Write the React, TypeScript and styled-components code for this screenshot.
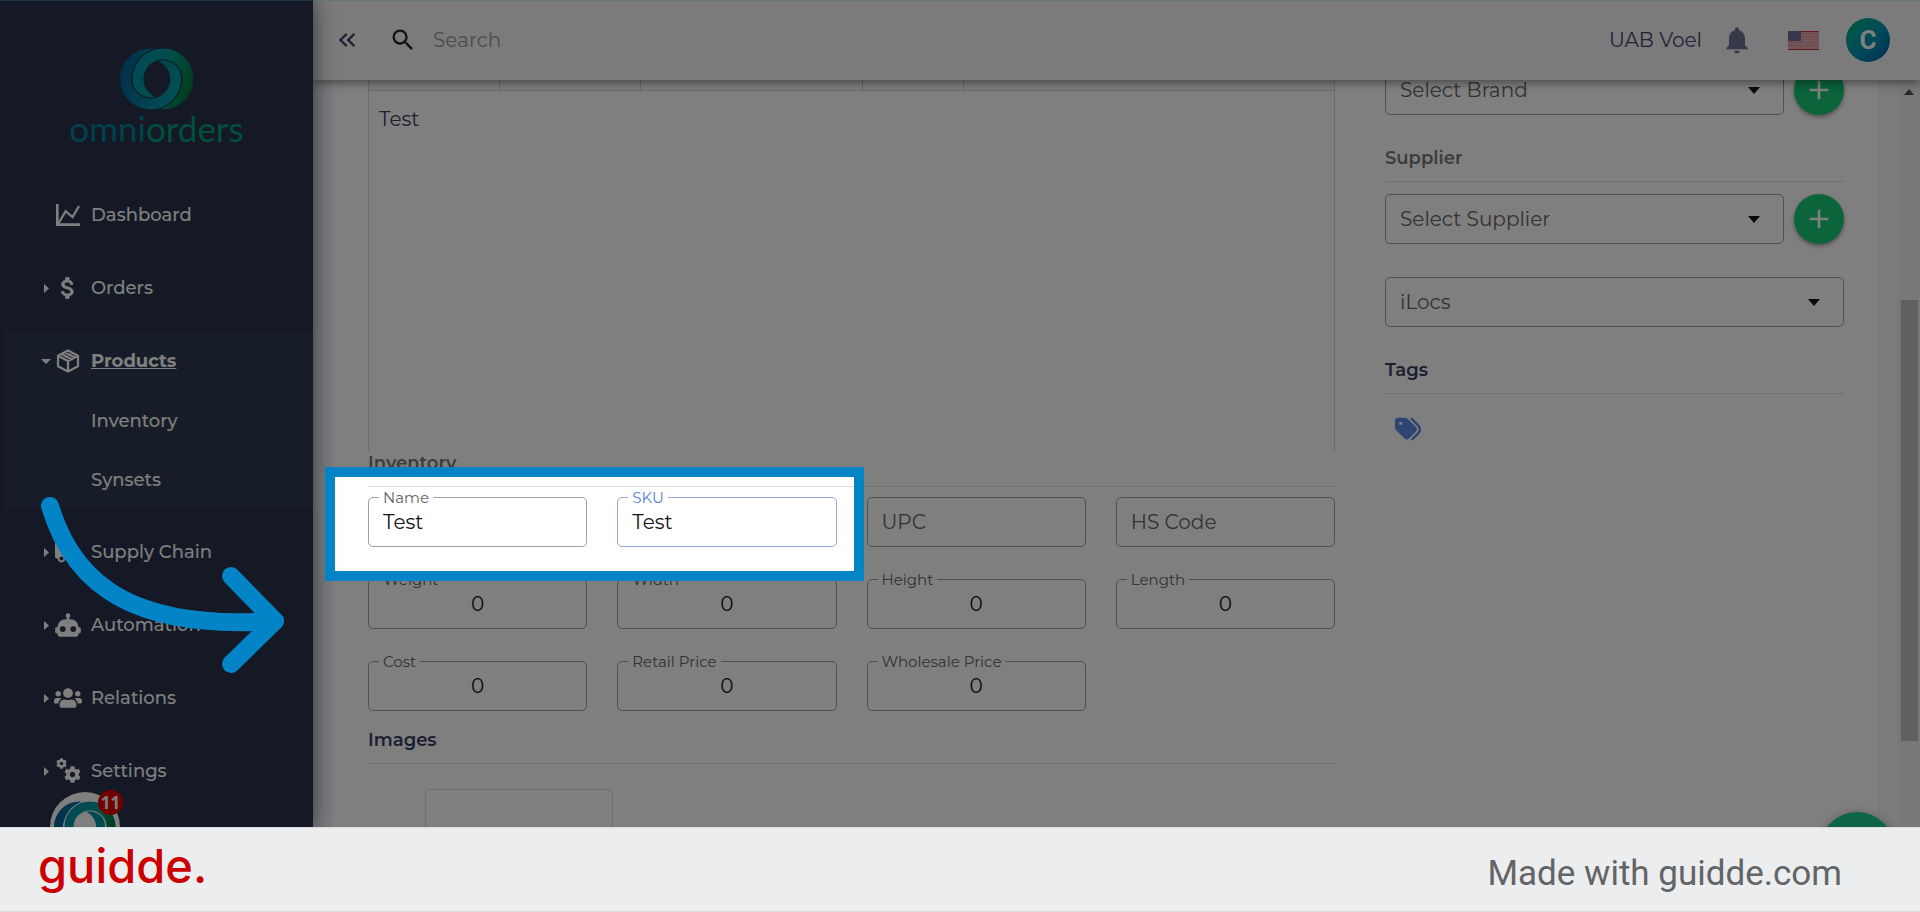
import React from "react";
import styled, { createGlobalStyle, css } from "styled-components";
import {
  MdKeyboardDoubleArrowLeft,
  MdNotifications,
  MdSearch,
  MdAdd,
} from "react-icons/md";
import { FaCog, FaTruck, FaUsers } from "react-icons/fa";
import { FaTags } from "react-icons/fa6";

const ui = `Montserrat, Inter, "Liberation Sans", sans-serif`;
const accent = "#0284c7";

const GlobalStyle = createGlobalStyle`
  *, *::before, *::after { box-sizing: border-box; }
  body { margin: 0; font-family: ${ui}; font-weight: 400; color: #364060; }
  h1, h2, p, ul { margin: 0; padding: 0; }
  ul { list-style: none; }
  button, input, select { font: inherit; color: inherit; margin: 0; }
  button { cursor: pointer; padding: 0; border: 0; background: none; }
  a { color: inherit; text-decoration: none; }
`;

const Page = styled.div`
  display: flex;
  flex-direction: column;
  height: 100vh;
`;

const Stage = styled.div`
  position: relative;
  flex: 1;
  min-height: 0;
  display: flex;
  overflow: hidden;
  background: #f2f6fc;
  &::after {
    content: "";
    position: absolute;
    z-index: 5;
    inset: 0 0 auto;
    height: 1px;
    background: rgba(60, 110, 135, 0.3);
  }
`;

/* Sidebar */

const Sidebar = styled.nav`
  position: relative;
  z-index: 3;
  flex: 0 0 313px;
  background: #28324a;
  color: #fff;
  box-shadow: 0 0 20px rgba(0, 0, 0, 0.6);
`;

const Brand = styled.a`
  display: flex;
  flex-direction: column;
  align-items: center;
  height: 185px;
  padding-top: 47px;
`;

const BrandName = styled.span`
  font-family: Lato, sans-serif;
  font-size: 35px;
  line-height: 34px;
  color: #00829c;
`;

const BrandTail = styled.span`
  color: #00a078;
`;

const NavList = styled.ul`
  display: flex;
  flex-direction: column;
  gap: 13px;
`;

const NavGroup = styled.li<{ $open?: boolean }>`
  ${(p) => p.$open && css`
    margin-left: 5px;
    background: #2f3a50;
    a { padding-left: 35px; }
  `}
`;

const NavLink = styled.a<{ $active?: boolean }>`
  display: flex;
  align-items: center;
  height: 60px;
  padding-left: 40px;
  font-size: 18px;
  font-weight: ${(p) => (p.$active ? 700 : 500)};
  text-decoration: ${(p) => (p.$active ? "underline" : "none")};
`;

const SubLink = styled.a`
  display: flex;
  align-items: center;
  height: 59px;
  font-size: 18px;
  font-weight: 500;
  && { padding-left: 86px; }
`;

const Caret = styled.span`
  display: flex;
  flex: 0 0 12px;
  justify-content: center;
`;

const NavIcon = styled.span`
  display: flex;
  flex: 0 0 31px;
  justify-content: center;
  margin-right: 8px;
`;

const ChatButton = styled.button`
  position: absolute;
  left: 50px;
  bottom: -35px;
  width: 70px;
  height: 70px;
  display: grid;
  place-items: center;
  border-radius: 50%;
  background: #fff;
`;

const Badge = styled.span`
  position: absolute;
  top: -2px;
  right: -3px;
  width: 25px;
  height: 25px;
  border-radius: 50%;
  background: #e60000;
  color: #fff;
  font: 700 17px/25px "Open Sans", sans-serif;
  text-align: center;
`;

/* Top bar */

const Main = styled.div`
  flex: 1;
  min-width: 0;
  display: flex;
  flex-direction: column;
`;

const TopBar = styled.header`
  position: relative;
  z-index: 2;
  flex: 0 0 80px;
  display: flex;
  align-items: center;
  padding: 0 30px 0 20px;
  background: #f6f6f6;
  box-shadow: 0 2px 10px rgba(0, 0, 0, 0.5);
`;

const IconButton = styled.button`
  display: flex;
  align-items: center;
  justify-content: center;
`;

const Search = styled.label`
  display: flex;
  align-items: center;
  width: 281px;
  height: 52px;
  margin-left: 12px;
  padding-left: 15px;
  gap: 16px;
  border: 1px solid #eee;
  border-radius: 6px;
  color: #222;
`;

const SearchInput = styled.input`
  flex: 1;
  min-width: 0;
  padding: 0;
  border: 0;
  outline: 0;
  background: none;
  font-size: 20px;
  &::placeholder { color: #9a9a9a; opacity: 1; }
`;

const Account = styled.div`
  display: flex;
  align-items: center;
  margin-left: auto;
  font-size: 20px;
  color: #40466a;
`;

const Bell = styled(IconButton)`
  margin: 0 35px 0 19px;
  color: #6c7490;
`;

const Avatar = styled.button`
  width: 44px;
  height: 44px;
  margin-left: 27px;
  border-radius: 50%;
  background: linear-gradient(135deg, #00b478 0%, #0098b4 50%, #0060a8 100%);
  color: #fff;
  font: 700 26px/44px Roboto, sans-serif;
`;

/* Scrolled form */

const Viewport = styled.div`
  flex: 1;
  min-height: 0;
  display: flex;
  overflow: hidden;
`;

const Paper = styled.main`
  flex: 1;
  display: grid;
  grid-template-columns: 967fr 459fr;
  column-gap: 50px;
  align-items: start;
  margin: -15px 20px 0;
  padding: 0 34px 0 35px;
  background: #fff;
`;

const Editor = styled.section`
  height: 386px;
  border: solid #d8d8d8;
  border-width: 0 1px;
`;

const EditorTools = styled.div`
  display: flex;
  height: 26px;
  background: #fbfbfb;
  border-bottom: 1px solid #dadada;
`;

const ToolGroup = styled.div<{ $w: number }>`
  flex: 0 0 ${(p) => p.$w}px;
  border-right: 1px solid #d0d0d0;
`;

const EditorText = styled.p`
  padding: 16px 10px;
  font-size: 20px;
  line-height: 24px;
`;

const Heading = styled.h2<{ $muted?: boolean }>`
  padding-bottom: 11px;
  border-bottom: 1px solid #dedede;
  font-size: 18px;
  line-height: 24px;
  font-weight: 600;
  color: ${(p) => (p.$muted ? "#787878" : "#364060")};
`;

const FieldGrid = styled.div`
  display: grid;
  grid-template-columns: repeat(4, minmax(0, 1fr));
  gap: 32px 30px;
  margin: 10px 0 17px;
`;

const FieldBox = styled.label<{ $focus?: boolean }>`
  position: relative;
  display: block;
  color: ${(p) => (p.$focus ? "#5a80d0" : "#666")};
  --line: ${(p) => (p.$focus ? "#94a8d4" : "#a0a0a0")};
`;

const FieldLabel = styled.span`
  position: absolute;
  top: -9px;
  left: 11px;
  padding: 0 4px;
  background: #fff;
  font-size: 15px;
  line-height: 20px;
`;

const control = css`
  display: block;
  width: 100%;
  height: 50px;
  padding: 0 14px;
  border: 1px solid var(--line, #a0a0a0);
  border-radius: 5px;
  background: none;
  outline: 0;
  font-size: 20px;
`;

const Input = styled.input<{ $center?: boolean }>`
  ${control}
  color: #141414;
  text-align: ${(p) => (p.$center ? "center" : "left")};
  &::placeholder { color: #666; opacity: 1; }
`;

const ImageSlot = styled.div`
  width: 188px;
  height: 188px;
  margin: 25px 0 0 57px;
  border: 1px solid #dcdcdc;
  border-radius: 5px;
`;

const SelectBox = styled.label`
  position: relative;
  flex: 1;
  display: block;
  svg {
    position: absolute;
    top: 22px;
    right: 24px;
    pointer-events: none;
  }
`;

const Select = styled.select`
  ${control}
  appearance: none;
  color: #666;
`;

const SelectRow = styled.div`
  display: flex;
  gap: 10px;
`;

const AddButton = styled.button`
  display: grid;
  place-items: center;
  width: 50px;
  height: 50px;
  border-radius: 50%;
  background: #16c874;
  color: #fff;
  box-shadow: 0 2px 4px rgba(0, 0, 0, 0.4);
`;

const Aside = styled.aside`
  display: flex;
  flex-direction: column;
`;

const AsideBlock = styled.section<{ $gap: number }>`
  display: flex;
  flex-direction: column;
  gap: 12px;
  margin-top: ${(p) => p.$gap}px;
`;

const TagButton = styled(IconButton)`
  align-self: flex-start;
  margin: 10px 0 0 10px;
  color: #5c88e4;
`;

const ScrollBar = styled.div`
  flex: 0 0 22px;
  display: flex;
  flex-direction: column;
  align-items: center;
  background: #f1f1f1;
`;

const ScrollArrow = styled.span`
  display: flex;
  justify-content: center;
  padding-top: 9px;
  flex: 0 1 220px;
`;

const ScrollThumb = styled.span`
  width: 17px;
  height: 59%;
  background: #c1c1c1;
`;

const Fab = styled.button`
  position: absolute;
  right: 26px;
  bottom: -59px;
  width: 74px;
  height: 74px;
  border-radius: 50%;
  background: #1ac88c;
  box-shadow: 0 3px 12px rgba(0, 0, 0, 0.4);
`;

/* Guide overlay */

const Spotlight = styled.div`
  position: absolute;
  z-index: 4;
  left: 325px;
  top: 467px;
  width: 539px;
  height: 114px;
  border: 10px solid ${accent};
  box-shadow: 0 0 0 4000px rgba(0, 0, 0, 0.5);
  pointer-events: none;
`;

const GuideArrow = styled.svg`
  position: absolute;
  z-index: 5;
  left: 40px;
  top: 496px;
  pointer-events: none;
`;

const Footer = styled.footer`
  flex: 0 0 85px;
  display: flex;
  align-items: center;
  justify-content: space-between;
  padding: 0 78px 0 38px;
  background: #ecedef;
  border: solid #dcdcdf;
  border-width: 1px 0;
`;

const GuiddeLogo = styled.a`
  padding-bottom: 8px;
  font-family: Inter, sans-serif;
  font-size: 47px;
  line-height: 60px;
  font-weight: 500;
  color: #cc0000;
`;

const Credit = styled.span`
  padding-top: 8px;
  font-family: Roboto, sans-serif;
  font-size: 35px;
  color: #626466;
`;

const leftRing = "M31.500 1a31 31 0 1 0 0 62a31 31 0 1 0 0-62zM31.500 13a19 19 0 1 0 0 38a19 19 0 1 0 0-38z";
const rightRing = "M44 1a31 31 0 1 0 0 62a31 31 0 1 0 0-62zM44 13a19 19 0 1 0 0 38a19 19 0 1 0 0-38z";

/* Two interlocked rings: the right one passes over on top, the left one below. */
const Rings = ({ width, height, id, gap }: { width: number; height: number; id: string; gap: string }) => (
  <svg width={width} height={height} viewBox="0 0 76 64" aria-hidden="true">
    <defs>
      <linearGradient id={`${id}a`} x1="0" y1="0.2" x2="1" y2="0.5">
        <stop offset="0" stopColor="#0a5a98" />
        <stop offset="0.5" stopColor="#00809c" />
        <stop offset="1" stopColor="#00a0a8" />
      </linearGradient>
      <linearGradient id={`${id}b`} x1="0" y1="0.3" x2="1" y2="0.6">
        <stop offset="0" stopColor="#0094b0" />
        <stop offset="0.5" stopColor="#009c98" />
        <stop offset="1" stopColor="#007c34" />
      </linearGradient>
      <clipPath id={`${id}c`}><path d="M0 32h76v32H0z" /></clipPath>
    </defs>
    <g fillRule="evenodd" stroke={gap} strokeWidth="1.200">
      <path d={leftRing} fill={`url(#${id}a)`} />
      <path d={rightRing} fill={`url(#${id}b)`} />
      <path d={leftRing} fill={`url(#${id}a)`} clipPath={`url(#${id}c)`} />
    </g>
  </svg>
);

const ChartIcon = () => (
  <svg width="24" height="22" viewBox="0 0 24 22" fill="none" stroke="currentColor" strokeWidth="2.600">
    <path d="M1.300 0v20.600H24" />
    <path d="M2 20L9.700 7.200L16.500 13L23 2" strokeWidth="2.300" />
  </svg>
);

const DollarIcon = () => (
  <svg width="28" height="28" viewBox="0 0 24 24" fill="currentColor" stroke="currentColor" strokeWidth="0.600">
    <path d="M11.800 10.900c-2.270-.59-3-1.200-3-2.150 0-1.090 1.010-1.850 2.700-1.850 1.780 0 2.440.85 2.500 2.100h2.210c-.07-1.720-1.120-3.300-3.210-3.810V3h-3v2.160c-1.940.42-3.500 1.680-3.500 3.610 0 2.310 1.910 3.460 4.700 4.130 2.500.6 3 1.480 3 2.410 0 .69-.49 1.790-2.700 1.790-2.060 0-2.870-.92-2.980-2.100h-2.200c.12 2.190 1.760 3.420 3.680 3.830V21h3v-2.150c1.950-.37 3.500-1.500 3.500-3.550 0-2.840-2.430-3.810-4.700-4.400z" />
  </svg>
);

const BoxIcon = () => (
  <svg width="24" height="24" viewBox="0 0 24 24" fill="none" stroke="currentColor" strokeWidth="2.200" strokeLinejoin="round">
    <path d="M12 1.500l10 5.300v10.400l-10 5.300l-10-5.300V6.800zM2 6.800l10 5.200l10-5.200M12 12v10.500M5.500 5l10 5.200M8.800 3.200l10 5.200" />
  </svg>
);

const RobotIcon = () => (
  <svg width="28" height="28" viewBox="0 0 24 24" fill="currentColor">
    <path d="M12 2a2 2 0 0 1 2 2c0 .74-.4 1.390-1 1.730V7h1a7 7 0 0 1 7 7h1a1 1 0 0 1 1 1v3a1 1 0 0 1-1 1h-1v1a2 2 0 0 1-2 2H5a2 2 0 0 1-2-2v-1H2a1 1 0 0 1-1-1v-3a1 1 0 0 1 1-1h1a7 7 0 0 1 7-7h1V5.730c-.6-.34-1-.99-1-1.730a2 2 0 0 1 2-2M7.500 13A2.500 2.500 0 0 0 5 15.500 2.500 2.500 0 0 0 7.500 18a2.500 2.500 0 0 0 2.500-2.500A2.500 2.500 0 0 0 7.500 13m9 0a2.500 2.500 0 0 0-2.500 2.500 2.500 2.500 0 0 0 2.500 2.500 2.500 2.500 0 0 0 2.500-2.500 2.500 2.500 0 0 0-2.500-2.500z" />
  </svg>
);

const GearsIcon = () => (
  <svg width="26" height="26" viewBox="0 0 26 26">
    <FaCog x="1" y="0" size={11} />
    <FaCog x="9" y="8" size={17} />
  </svg>
);

const FlagIcon = () => (
  <svg width="31" height="19" viewBox="0 0 31 19" aria-hidden="true">
    <rect width="31" height="19" fill="#e8aab0" />
    {[2, 5, 8, 11, 14].map((y) => (
      <rect key={y} y={y} width="31" height="1" fill="#dc969c" />
    ))}
    <path d="M0 0h31v1H0zM0 18h31v1H0z" fill="#c8323c" />
    <rect width="13" height="10" fill="#6e6c9a" />
  </svg>
);

const CaretIcon = ({ down }: { down?: boolean }) =>
  down ? (
    <svg width="10" height="5" viewBox="0 0 10 5"><path d="M0 0h10L5 5z" fill="currentColor" /></svg>
  ) : (
    <svg width="5" height="9" viewBox="0 0 5 9"><path d="M0 0l5 4.500L0 9z" fill="currentColor" /></svg>
  );

type NavProps = { icon: React.ReactNode; label: string; caret?: "right" | "down"; active?: boolean };

const NavRow = ({ icon, label, caret, active }: NavProps) => (
  <NavLink href="#" $active={active}>
    <Caret>{caret && <CaretIcon down={caret === "down"} />}</Caret>
    <NavIcon>{icon}</NavIcon>
    {label}
  </NavLink>
);

type FieldProps = { label: string; value?: string; center?: boolean; focus?: boolean };

const Field = ({ label, value, center, focus }: FieldProps) => (
  <FieldBox $focus={focus}>
    {value !== undefined && <FieldLabel>{label}</FieldLabel>}
    <Input
      $center={center}
      defaultValue={value}
      placeholder={value === undefined ? label : undefined}
      aria-label={label}
    />
  </FieldBox>
);

const Dropdown = ({ label }: { label: string }) => (
  <SelectBox>
    <Select aria-label={label} defaultValue="">
      <option value="">{label}</option>
    </Select>
    <svg width="12" height="7" viewBox="0 0 12 7"><path d="M0 0h12L6 7z" fill="#141414" /></svg>
  </SelectBox>
);

const fields: FieldProps[] = [
  { label: "Name", value: "Test" },
  { label: "SKU", value: "Test", focus: true },
  { label: "UPC" },
  { label: "HS Code" },
  ...["Weight", "Width", "Height", "Length", "Cost", "Retail Price", "Wholesale Price"].map((label) => ({
    label,
    value: "0",
    center: true,
  })),
];

export default function App() {
  return (
    <Page>
      <GlobalStyle />
      <Stage>
        <Sidebar>
          <Brand href="#">
            <Rings width={76} height={64} id="brand" gap="#28324a" />
            <BrandName>omni<BrandTail>orders</BrandTail></BrandName>
          </Brand>
          <NavList>
            <NavGroup><NavRow icon={<ChartIcon />} label="Dashboard" /></NavGroup>
            <NavGroup><NavRow icon={<DollarIcon />} label="Orders" caret="right" /></NavGroup>
            <NavGroup $open>
              <NavRow icon={<BoxIcon />} label="Products" caret="down" active />
              <SubLink href="#">Inventory</SubLink>
              <SubLink href="#">Synsets</SubLink>
            </NavGroup>
            <NavGroup><NavRow icon={<FaTruck size={26} />} label="Supply Chain" caret="right" /></NavGroup>
            <NavGroup><NavRow icon={<RobotIcon />} label="Automation" caret="right" /></NavGroup>
            <NavGroup><NavRow icon={<FaUsers size={28} />} label="Relations" caret="right" /></NavGroup>
            <NavGroup><NavRow icon={<GearsIcon />} label="Settings" caret="right" /></NavGroup>
          </NavList>
          <ChatButton aria-label="Open chat">
            <Rings width={64} height={54} id="chat" gap="#fff" />
            <Badge>11</Badge>
          </ChatButton>
        </Sidebar>

        <Main>
          <TopBar>
            <IconButton aria-label="Collapse menu"><MdKeyboardDoubleArrowLeft size={28} color="#40466a" /></IconButton>
            <Search>
              <MdSearch size={28} />
              <SearchInput placeholder="Search" aria-label="Search" />
            </Search>
            <Account>
              UAB Voel
              <Bell aria-label="Notifications"><MdNotifications size={32} /></Bell>
              <IconButton aria-label="Language"><FlagIcon /></IconButton>
              <Avatar>C</Avatar>
            </Account>
          </TopBar>

          <Viewport>
            <Paper>
              <div>
                <Editor>
                  <EditorTools>
                    <ToolGroup $w={131} />
                    <ToolGroup $w={141} />
                    <ToolGroup $w={222} />
                    <ToolGroup $w={101} />
                  </EditorTools>
                  <EditorText>Test</EditorText>
                </Editor>
                <Heading $muted>Inventory</Heading>
                <FieldGrid>
                  {fields.map((f) => <Field key={f.label} {...f} />)}
                </FieldGrid>
                <Heading>Images</Heading>
                <ImageSlot />
              </div>

              <Aside>
                <SelectRow>
                  <Dropdown label="Select Brand" />
                  <AddButton aria-label="Add brand"><MdAdd size={32} /></AddButton>
                </SelectRow>
                <AsideBlock $gap={31}>
                  <Heading $muted>Supplier</Heading>
                  <SelectRow>
                    <Dropdown label="Select Supplier" />
                    <AddButton aria-label="Add supplier"><MdAdd size={32} /></AddButton>
                  </SelectRow>
                </AsideBlock>
                <AsideBlock $gap={33}>
                  <Dropdown label="iLocs" />
                </AsideBlock>
                <AsideBlock $gap={31}>
                  <Heading>Tags</Heading>
                  <TagButton aria-label="Add tag"><FaTags size={26} /></TagButton>
                </AsideBlock>
              </Aside>
            </Paper>
            <ScrollBar aria-hidden="true">
              <ScrollArrow>
                <svg width="10" height="6" viewBox="0 0 10 6"><path d="M0 6h10L5 0z" fill="#505050" /></svg>
              </ScrollArrow>
              <ScrollThumb />
            </ScrollBar>
          </Viewport>
          <Fab aria-label="Save" />
        </Main>

        <Spotlight />
        <GuideArrow width="246" height="180" viewBox="40 496 246 180" fill="none" stroke={accent} strokeWidth="18" strokeLinecap="round" strokeLinejoin="round" aria-hidden="true">
          <path d="M50 506C75 590 140 630 275 621" />
          <path d="M231 576L275 621L231 664" />
        </GuideArrow>
      </Stage>

      <Footer>
        <GuiddeLogo href="#">guidde.</GuiddeLogo>
        <Credit>Made with guidde.com</Credit>
      </Footer>
    </Page>
  );
}
